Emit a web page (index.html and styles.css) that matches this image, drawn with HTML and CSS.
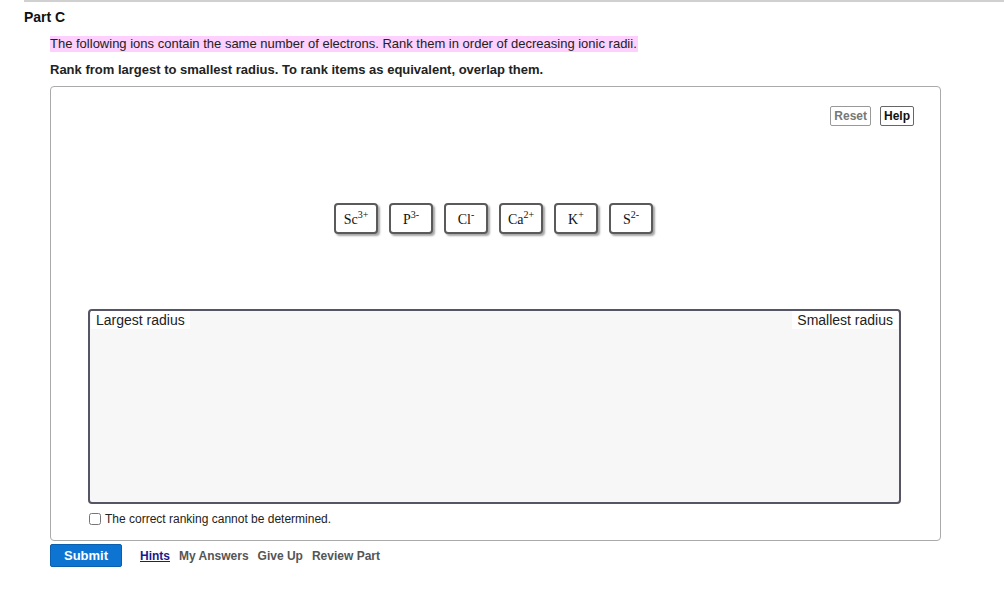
FILE: index.html
```html
<!DOCTYPE html>
<html lang="en">
<head>
    <meta charset="UTF-8">
    <title>Part C</title>
    <link rel="stylesheet" href="styles.css">
</head>
<body>

<div class="part">
    <h2 class="part-title">Part C</h2>

    <div class="part-body">
        <p class="prompt"><span class="highlight">The following ions contain the same number of electrons. Rank them in order of decreasing ionic radii.</span></p>
        <p class="instructions">Rank from largest to smallest radius. To rank items as equivalent, overlap them.</p>

        <div class="ranking-box">
            <div class="tools">
                <button class="tool-btn reset">Reset</button>
                <button class="tool-btn">Help</button>
            </div>

            <div class="tiles">
                <div class="tile">Sc<sup>3+</sup></div>
                <div class="tile">P<sup>3-</sup></div>
                <div class="tile">Cl<sup>-</sup></div>
                <div class="tile">Ca<sup>2+</sup></div>
                <div class="tile">K<sup>+</sup></div>
                <div class="tile">S<sup>2-</sup></div>
            </div>

            <div class="drop-area">
                <span class="label">Largest radius</span>
                <span class="label">Smallest radius</span>
            </div>

            <label class="cannot">
                <input type="checkbox"> The correct ranking cannot be determined.
            </label>
        </div>

        <div class="actions">
            <button class="submit-btn">Submit</button>
            <a href="#" class="hints">Hints</a>
            <a href="#" class="link">My Answers</a>
            <a href="#" class="link">Give Up</a>
            <a href="#" class="link">Review Part</a>
        </div>
    </div>
</div>

</body>
</html>
```

FILE: styles.css
```css
body {
    margin: 0;
    padding: 0;
    font-family: "Liberation Sans", Arial, sans-serif;
    color: #222;
    background-color: #ffffff;
}

.part {
    margin-left: 24px;
    border-top: 2px solid #d0d0d0;
}

.part-title {
    margin: 0;
    padding-top: 7px;
    font-size: 14px;
    font-weight: bold;
    color: #111;
    line-height: 16px;
}

.part-body {
    padding-left: 26px;
    width: 891px;
}

.prompt {
    margin: 11px 0 0 0;
    font-size: 13px;
    line-height: 15px;
}

.highlight {
    background-color: #fdd0fd;
    padding: 0 1px 1px 0;
}

.instructions {
    margin: 11px 0 0 0;
    font-size: 13px;
    font-weight: bold;
    line-height: 15px;
}

.ranking-box {
    margin-top: 9px;
    border: 1px solid #aaa;
    border-radius: 4px;
    height: 455px;
    box-sizing: border-box;
    padding: 19px 26px 0 37px;
}

.tools {
    display: flex;
    justify-content: flex-end;
    gap: 9px;
}

.tool-btn {
    font-family: "Liberation Sans", Arial, sans-serif;
    font-size: 12px;
    font-weight: bold;
    color: #111;
    background-color: #fff;
    border: 1px solid #666;
    border-radius: 2px;
    padding: 1px 3px;
    height: 20px;
    line-height: 16px;
}

.tool-btn.reset {
    color: #777;
    border-color: #999;
}

.tiles {
    display: flex;
    justify-content: center;
    gap: 11px;
    margin-top: 77px;
    margin-right: 15px;
}

.tile {
    width: 44px;
    height: 31px;
    box-sizing: border-box;
    border: 2px solid #5a5a5a;
    border-radius: 4px;
    background-color: #fff;
    box-shadow: 2px 2px 2px rgba(0, 0, 0, 0.35);
    font-family: "Liberation Serif", "Times New Roman", serif;
    font-size: 14px;
    color: #111;
    display: flex;
    align-items: center;
    justify-content: center;
    padding-top: 3px;
}

.tile sup {
    font-size: 10px;
    line-height: 1;
    position: relative;
    top: -5px;
    vertical-align: baseline;
}

.drop-area {
    margin-top: 75px;
    margin-right: 13px;
    height: 195px;
    box-sizing: border-box;
    border: 2px solid #555566;
    border-radius: 4px;
    background-color: #f7f7f7;
    display: flex;
    justify-content: space-between;
    align-items: flex-start;
    padding: 0 1px;
}

.label {
    background-color: #fff;
    font-size: 14px;
    line-height: 18px;
    color: #222;
    padding: 0 5px;
}

.cannot {
    display: flex;
    align-items: center;
    margin-top: 8px;
    font-size: 12px;
    color: #222;
}

.cannot input {
    margin: 0 4px 0 1px;
    width: 12px;
    height: 12px;
}

.actions {
    display: flex;
    align-items: center;
    margin-top: 3px;
    gap: 9px;
}

.submit-btn {
    background-color: #0d74d1;
    color: #fff;
    font-family: "Liberation Sans", Arial, sans-serif;
    font-size: 13px;
    font-weight: bold;
    border: 1px solid #0a5fae;
    border-radius: 2px;
    width: 72px;
    height: 23px;
    margin-right: 9px;
}

.hints,
.link {
    font-size: 12px;
    font-weight: bold;
    text-decoration: none;
}

.hints {
    color: #1a1a8c;
    text-decoration: underline;
}

.link {
    color: #555;
}
```
